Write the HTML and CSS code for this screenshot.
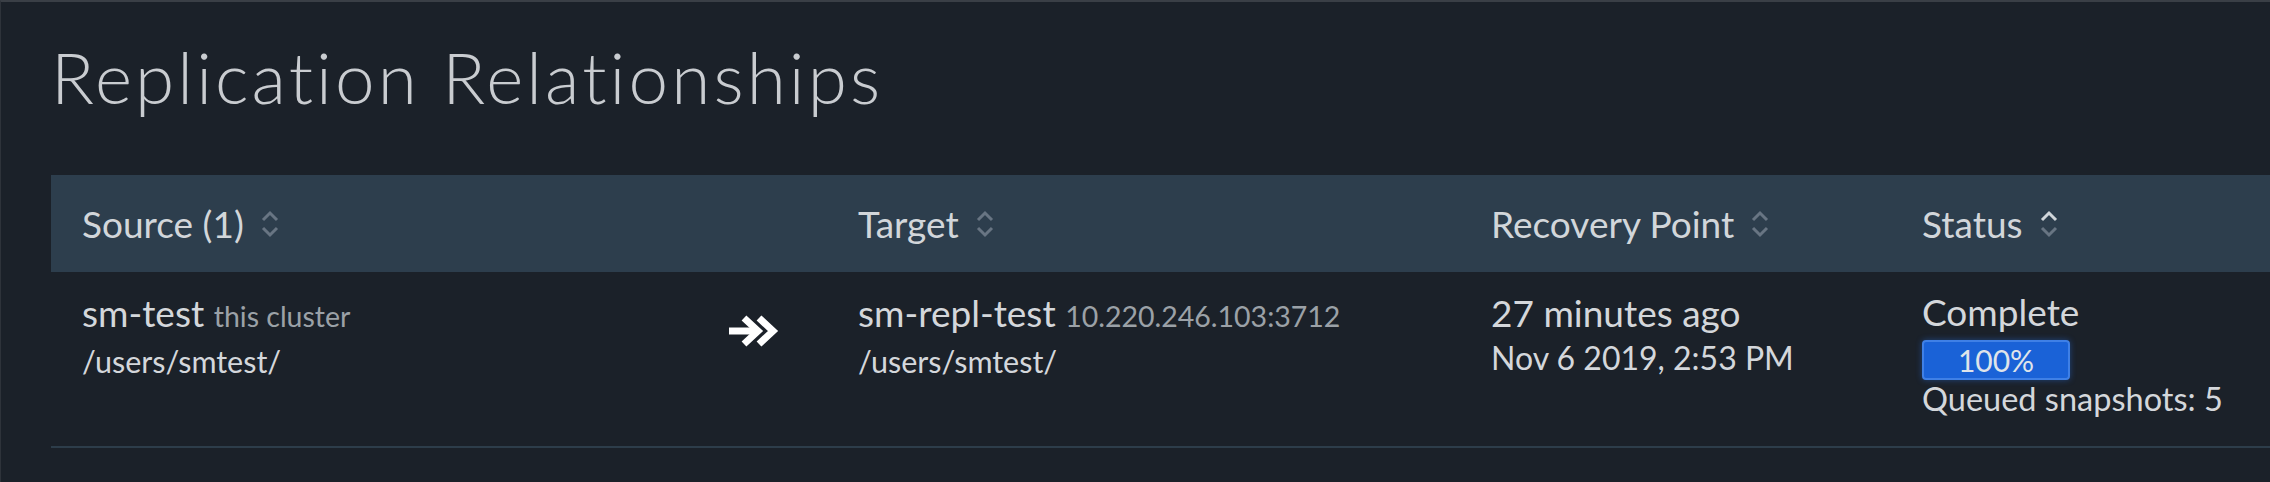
FILE: index.html
```html
<!DOCTYPE html>
<html lang="en">
<head>
<meta charset="utf-8">
<title>Replication Relationships</title>
<link rel="stylesheet" href="styles.css">
</head>
<body>
<main class="page">
  <h1 class="title">Replication Relationships</h1>
  <div class="table">
    <div class="thead">
      <div class="th">Source (1)
        <svg class="sort" viewBox="0 0 18 30" width="18" height="30"><polyline class="up" points="2,11 9,4 16,11"/><polyline class="down" points="2,19 9,26 16,19"/></svg>
      </div>
      <div class="th"></div>
      <div class="th">Target
        <svg class="sort" viewBox="0 0 18 30" width="18" height="30"><polyline class="up" points="2,11 9,4 16,11"/><polyline class="down" points="2,19 9,26 16,19"/></svg>
      </div>
      <div class="th">Recovery Point
        <svg class="sort" viewBox="0 0 18 30" width="18" height="30"><polyline class="up" points="2,11 9,4 16,11"/><polyline class="down" points="2,19 9,26 16,19"/></svg>
      </div>
      <div class="th">Status
        <svg class="sort" viewBox="0 0 18 30" width="18" height="30"><polyline class="up active" points="2,11 9,4 16,11"/><polyline class="down" points="2,19 9,26 16,19"/></svg>
      </div>
    </div>
    <div class="row">
      <div class="cell">
        <div class="line main"><span class="name">sm-test</span> <span class="meta">this cluster</span></div>
        <div class="line sub path">/users/smtest/</div>
      </div>
      <div class="cell arrow-cell">
        <svg class="arrow" viewBox="0 0 50 34" width="50" height="34"><line x1="0" y1="17" x2="28" y2="17"/><polyline points="15,4 29,17 15,30"/><polyline points="30,4 44,17 30,30"/></svg>
      </div>
      <div class="cell">
        <div class="line main"><span class="name">sm-repl-test</span> <span class="meta">10.220.246.103:3712</span></div>
        <div class="line sub path">/users/smtest/</div>
      </div>
      <div class="cell">
        <div class="line main">27 minutes ago</div>
        <div class="line sub">Nov 6 2019, 2:53 PM</div>
      </div>
      <div class="cell status">
        <div class="status-line">Complete</div>
        <div class="progress"><span>100%</span></div>
        <div class="queued">Queued snapshots: 5</div>
      </div>
    </div>
  </div>
</main>
</body>
</html>
```

FILE: styles.css
```css
html, body {
  margin: 0;
  padding: 0;
  background: #1b2129;
}
body {
  border-top: 2px solid #3a3f46;
  border-left: 1px solid #2e333a;
  min-height: 480px;
  font-family: "Lato", "Liberation Sans", sans-serif;
  color: #d4d7db;
}
.page {
  padding-left: 50px;
}
.title {
  margin: 32px 0 56px 0;
  font-weight: 300;
  font-size: 71px;
  line-height: 85px;
  color: #c9ccd0;
  letter-spacing: 3.1px;
}
.thead, .row {
  display: grid;
  grid-template-columns: 647px 129px 633px 431px 1fr;
  padding-left: 31px;
}
.thead {
  background: #2d3e4d;
  height: 97px;
  align-items: center;
}
.th {
  display: flex;
  align-items: center;
  gap: 17px;
  font-size: 37px;
  color: #d2d6da;
}
.sort {
  fill: none;
  stroke-width: 3;
  stroke-linecap: butt;
  stroke-linejoin: miter;
}
.sort .up, .sort .down {
  stroke: #687583;
}
.sort .up.active {
  stroke: #d0d5da;
}
.row {
  padding-top: 18px;
  padding-bottom: 30px;
  border-bottom: 2px solid #2d3d4a;
  align-items: start;
}
.cell {
  font-size: 37px;
}
.line {
  line-height: 45px;
  white-space: nowrap;
}
.line.sub {
  font-size: 32px;
}
.line.sub.path {
  font-size: 30.5px;
}
.meta {
  font-size: 28.5px;
  color: #9ba1a7;
}
.arrow-cell {
  padding-top: 24px;
}
.arrow {
  display: block;
  fill: none;
  stroke: #ffffff;
  stroke-width: 7;
  stroke-linejoin: miter;
}
.status {
  margin-top: 2px;
}
.status-line {
  line-height: 40px;
}
.progress {
  margin-top: 8px;
  width: 148px;
  height: 40px;
  box-sizing: border-box;
  background: #1a62d7;
  border: 2px solid #3f80e6;
  border-radius: 4px;
  box-shadow: 0 0 6px rgba(40, 110, 230, 0.45);
  display: flex;
  align-items: center;
  justify-content: center;
  font-size: 30px;
  color: #dfe4ea;
}
.queued {
  margin-top: 2px;
  font-size: 32.5px;
  line-height: 34px;
  white-space: nowrap;
}
```
